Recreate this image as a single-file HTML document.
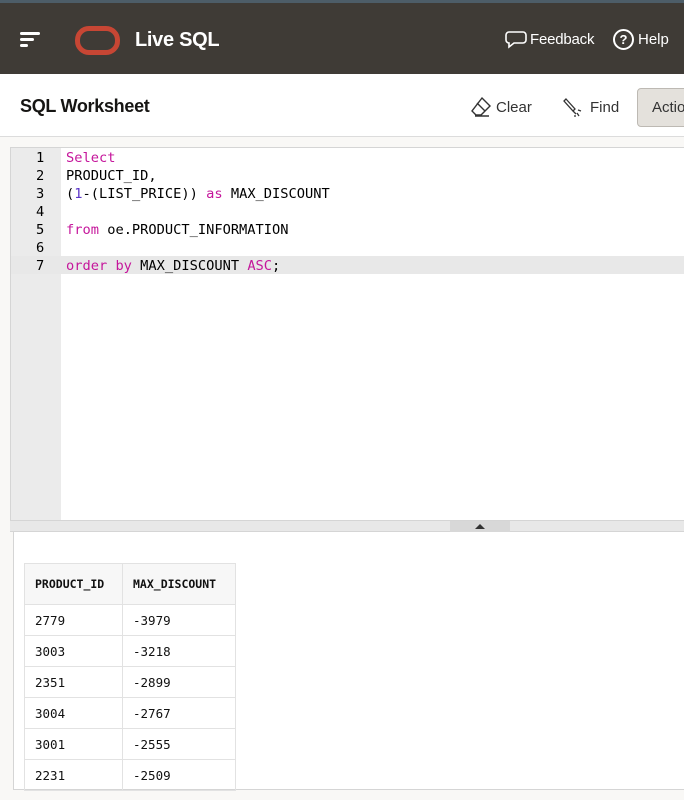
<!DOCTYPE html>
<html><head><meta charset="utf-8"><style>
*{margin:0;padding:0;box-sizing:border-box}
body{width:684px;height:800px;overflow:hidden;background:#f9f8f6;font-family:"Liberation Sans",sans-serif;position:relative}
.top{position:absolute;left:0;top:0;width:684px;height:3px;background:#4d5d68}
.hdr{position:absolute;left:0;top:3px;width:684px;height:71px;background:#3f3b36;color:#fff}
.tb{position:absolute;left:0;top:74px;width:684px;height:63px;background:#fff;border-bottom:1px solid #dcdcdc}
.ed{position:absolute;left:10px;top:147px;width:680px;height:374px;background:#fff;border:1px solid #d5d5d5}
.gut{position:absolute;left:0;top:0;width:50px;height:100%;background:#ebebeb}
.ln{position:absolute;font:13.7px "DejaVu Sans Mono","Liberation Mono",monospace;height:18px;line-height:18px;top:1px}
.k{color:#c5169b}.n{color:#5a34c8}
.spl{position:absolute;left:10px;top:521px;width:680px;height:11px;background:#e8e8e8;border-bottom:1px solid #d5d5d5}
.res{position:absolute;left:13px;top:532px;width:680px;height:258px;background:#fff;border-left:1px solid #d5d5d5;border-bottom:1px solid #d5d5d5}
table{position:absolute;left:10px;top:31px;border-collapse:collapse;font:12.5px "DejaVu Sans Mono","Liberation Mono",monospace;color:#111;table-layout:fixed;width:211px}
td,th{border:1px solid #e2e2e2;padding:0 10px;text-align:left;height:31px;white-space:nowrap}
th{height:41px;background:#f7f7f7;font-weight:bold;font-size:11.5px}
</style></head><body>
<div class="top"></div>
<div class="hdr">
 <div style="position:absolute;left:20px;top:29px;width:20px;height:3px;background:#fff;border-radius:2px"></div>
 <div style="position:absolute;left:20px;top:35px;width:14px;height:3px;background:#fff;border-radius:2px"></div>
 <div style="position:absolute;left:20px;top:41px;width:8px;height:3px;background:#fff;border-radius:2px"></div>
 <div style="position:absolute;left:75px;top:23px;width:45px;height:29px;border:5px solid #c74634;border-radius:14px"></div>
 <div style="position:absolute;left:135px;top:26px;font-size:20px;font-weight:bold;letter-spacing:-0.3px">Live SQL</div>
 <svg style="position:absolute;left:505px;top:27px" width="22" height="20" viewBox="0 0 22 20"><path d="M4 2h14a3 3 0 0 1 3 3v5a3 3 0 0 1-3 3H9l-5 4v-4a3 3 0 0 1-3-3V5a3 3 0 0 1 3-3z" fill="none" stroke="#fff" stroke-width="1.6"/></svg>
 <div style="position:absolute;left:530px;top:28px;font-size:15px;letter-spacing:-0.2px">Feedback</div>
 <div style="position:absolute;left:613px;top:26px;width:21px;height:21px;border:2px solid #fff;border-radius:50%;font-size:13px;font-weight:bold;text-align:center;line-height:17px">?</div>
 <div style="position:absolute;left:638px;top:28px;font-size:15px">Help</div>
</div>
<div class="tb">
 <div style="position:absolute;left:20px;top:22px;font-size:18px;font-weight:bold;color:#161513;letter-spacing:-0.3px">SQL Worksheet</div>
 <svg style="position:absolute;left:470px;top:22px" width="22" height="22" viewBox="0 0 22 22"><path d="M12 2l8 8-9 9H6l-4-4z M7 7l8 8 M5 20h14" fill="none" stroke="#333" stroke-width="1.4"/></svg>
 <div style="position:absolute;left:496px;top:25px;font-size:15px;color:#333">Clear</div>
 <svg style="position:absolute;left:563px;top:22px" width="24" height="22" viewBox="0 0 24 22"><path d="M3 3l9 10-2 2L1 5z M10 15l3 3 M15 14l3 1 M14 17l2 3 M12 19l0 2" fill="none" stroke="#333" stroke-width="1.3"/></svg>
 <div style="position:absolute;left:590px;top:25px;font-size:15px;color:#333">Find</div>
 <div style="position:absolute;left:637px;top:14px;width:60px;height:39px;background:#e4e1dc;border:1px solid #bdb9b3;border-radius:4px;font-size:15px;color:#333;padding:10px 0 0 14px">Actio</div>
</div>
<div class="ed">
 <div class="gut"></div>
 <div style="position:absolute;left:0;top:108px;width:680px;height:18px;background:#e8e8e8"></div>
 <div class="ln" style="left:25px;top:1px">1</div><div class="ln" style="left:55px;top:1px"><span class="k">Select</span></div>
 <div class="ln" style="left:25px;top:19px">2</div><div class="ln" style="left:55px;top:19px">PRODUCT_ID,</div>
 <div class="ln" style="left:25px;top:37px">3</div><div class="ln" style="left:55px;top:37px">(<span class="n">1</span>-(LIST_PRICE)) <span class="k">as</span> MAX_DISCOUNT</div>
 <div class="ln" style="left:25px;top:55px">4</div>
 <div class="ln" style="left:25px;top:73px">5</div><div class="ln" style="left:55px;top:73px"><span class="k">from</span> oe.PRODUCT_INFORMATION</div>
 <div class="ln" style="left:25px;top:91px">6</div>
 <div class="ln" style="left:25px;top:109px">7</div><div class="ln" style="left:55px;top:109px"><span class="k">order by</span> MAX_DISCOUNT <span class="k">ASC</span>;</div>
</div>
<div class="spl"><div style="position:absolute;left:440px;top:0;width:60px;height:11px;background:#d8d8d8"></div><div style="position:absolute;left:465px;top:3px;border:5px solid transparent;border-bottom:5px solid #333;border-top:0"></div></div>
<div class="res">
<table>
<colgroup><col style="width:98px"><col style="width:113px"></colgroup>
<tr><th>PRODUCT_ID</th><th>MAX_DISCOUNT</th></tr>
<tr><td>2779</td><td>-3979</td></tr>
<tr><td>3003</td><td>-3218</td></tr>
<tr><td>2351</td><td>-2899</td></tr>
<tr><td>3004</td><td>-2767</td></tr>
<tr><td>3001</td><td>-2555</td></tr>
<tr><td>2231</td><td>-2509</td></tr>
</table>
</div>
</body></html>
